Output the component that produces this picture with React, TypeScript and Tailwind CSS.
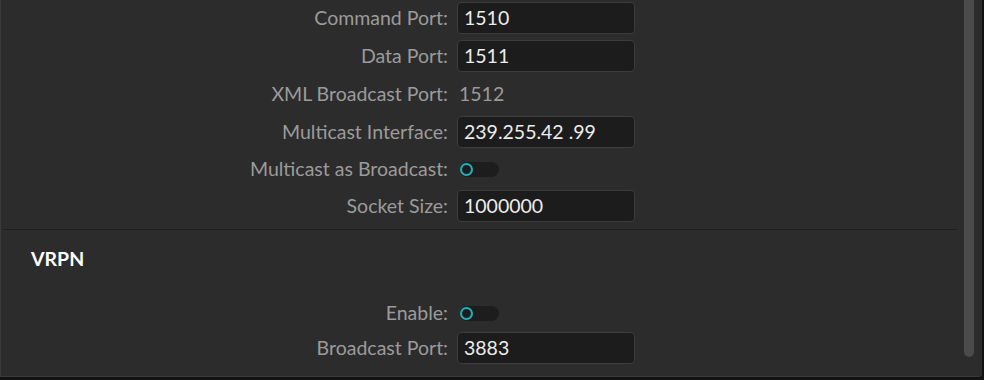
const font = { fontFamily: "Lato, 'Open Sans', sans-serif" };

function Label({ text }: { text: string }) {
  return (
    <div className="w-[456px] shrink-0 pr-[9px] text-right text-[#9b9b9b]">
      {text}
    </div>
  );
}

function InputRow({ label, value }: { label: string; value: string }) {
  return (
    <div className="flex h-[32px] items-center">
      <Label text={label} />
      <div className="flex h-[32px] w-[178px] items-center rounded-[4px] border border-[#3c3c3c] bg-[#1c1c1c] px-[6px] text-[#ececec]">
        {value}
      </div>
    </div>
  );
}

function ToggleRow({ label }: { label: string }) {
  return (
    <div className="flex h-[30px] items-center">
      <Label text={label} />
      <div className="ml-[3px] flex h-[15px] w-[39px] items-center rounded-full bg-[#1d1d1d]">
        <div className="h-[13px] w-[13px] rounded-full border-2 border-[#1fb3bf]" />
      </div>
    </div>
  );
}

export default function App() {
  return (
    <div className="h-[380px] w-[984px] overflow-hidden bg-[#121212]" style={font}>
      <div className="flex h-[377px] w-[982px] rounded-br-[4px] border-b border-l border-[#3a3a3a] bg-[#2c2c2c] text-[19.5px] leading-[24px]">
        <div className="flex flex-1 flex-col">
          {/* NatNet fields */}
          <div className="flex flex-col gap-[6px] pt-[2px]">
            <InputRow label="Command Port:" value="1510" />
            <InputRow label="Data Port:" value="1511" />
            <div className="flex h-[32px] items-center">
              <Label text="XML Broadcast Port:" />
              <div className="pl-[2px] text-[#9b9b9b]">1512</div>
            </div>
            <InputRow label="Multicast Interface:" value="239.255.42 .99" />
            <ToggleRow label="Multicast as Broadcast:" />
            <InputRow label="Socket Size:" value="1000000" />
          </div>

          <div className="mt-[7px] mr-[6px] ml-[2px] h-px bg-[#1f1f1f]" />

          {/* VRPN */}
          <div className="pt-[17px] pl-[30px] font-bold text-white">VRPN</div>
          <div className="mt-[27px] flex flex-col gap-[4px]">
            <ToggleRow label="Enable:" />
            <InputRow label="Broadcast Port:" value="3883" />
          </div>
        </div>

        {/* scrollbar */}
        <div className="w-[19px] shrink-0 pl-[1px]">
          <div className="h-[357px] w-[10px] rounded-b-full bg-[#4b4b4b]" />
        </div>
      </div>
    </div>
  );
}
